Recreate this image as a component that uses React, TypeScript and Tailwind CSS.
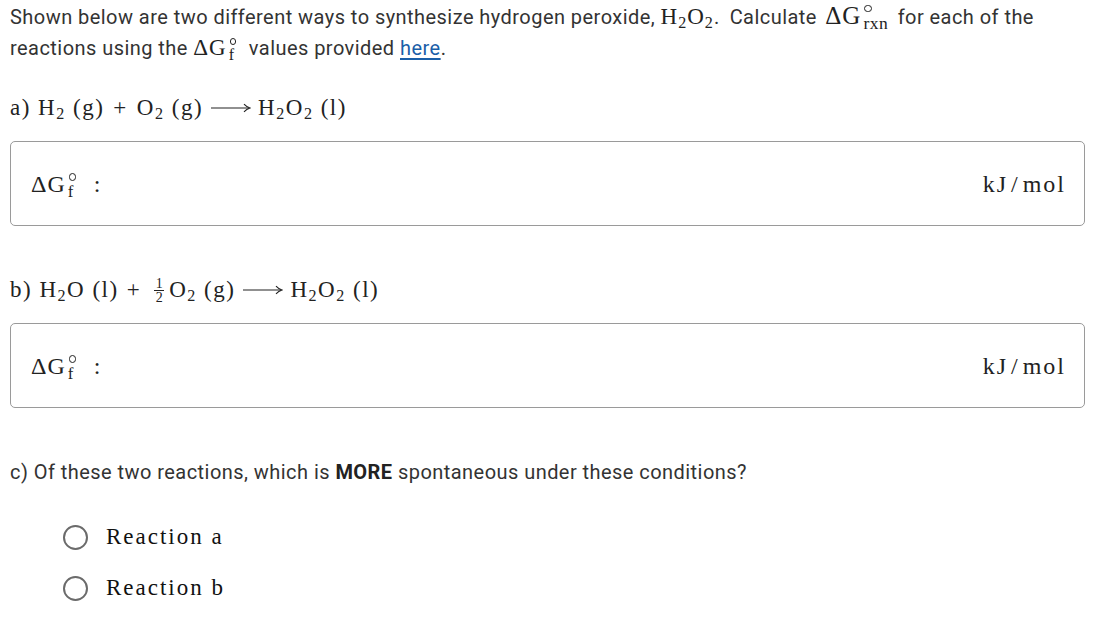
import React from "react";

const serif = { fontFamily: '"Liberation Serif", "DejaVu Serif", serif' };

const Sub = ({ children }: { children: React.ReactNode }) => (
  <span className="relative top-[0.22em] text-[0.7em]">{children}</span>
);

const Arrow = () => (
  <svg width="41" height="12" viewBox="0 0 41 12" className="mx-[7px] inline-block align-middle">
    <line x1="1" y1="6" x2="39" y2="6" stroke="#222" strokeWidth="1.1" />
    <path d="M34 2.2 Q36.5 5 40 6 Q36.5 7 34 9.8" fill="none" stroke="#222" strokeWidth="1.1" />
  </svg>
);

const Ring = () => (
  <span className="block h-[0.42em] w-[0.42em] rounded-full border border-[#222]" />
);

const DeltaG = ({ sub, className = "" }: { sub: string; className?: string }) => (
  <span className={"inline-flex items-center leading-none " + className} style={serif}>
    <span className="tracking-[1px]">ΔG</span>
    <span className="ml-[2px] inline-flex flex-col items-start text-[0.7em] leading-[0.9]">
      <span className="relative top-[-0.15em] flex h-[0.8em] items-end pl-[1px]">
        <Ring />
      </span>
      <span className="relative top-[0.05em] tracking-[0.5px]">{sub}</span>
    </span>
  </span>
);

const Half = () => (
  <span className="mx-[5px] inline-flex flex-col items-center align-middle text-[14px] leading-[13px] tracking-normal">
    <span>1</span>
    <span className="h-px w-[10px] bg-[#222]" />
    <span>2</span>
  </span>
);

const AnswerBox = () => (
  <div className="flex h-[85px] items-center justify-between rounded-[5px] border border-[#9a9a9a] pl-[20px] pr-[18px] text-[24px] text-[#222]">
    <span className="inline-flex items-center">
      <DeltaG sub="f" />
      <span className="ml-[18px]" style={serif}>:</span>
    </span>
    <span className="tracking-[2px]" style={serif}>
      kJ<span className="mx-[3px]">/</span>mol
    </span>
  </div>
);

const Radio = ({ label }: { label: string }) => (
  <label className="flex h-[30px] items-center">
    <span className="h-[25px] w-[25px] rounded-full border-2 border-[#6b6b6b] bg-white" />
    <span className="ml-[18px] text-[23px] tracking-[2px] text-[#111]" style={serif}>{label}</span>
  </label>
);

export default function App() {
  return (
    <div
      className="h-[635px] w-[1095px] bg-white px-[10px] pt-[1px] text-[20px] text-[#333]"
      style={{ fontFamily: 'Roboto, "Liberation Sans", sans-serif' }}
    >
      <p className="leading-[31px] tracking-[0.45px]">
        Shown below are two different ways to synthesize hydrogen peroxide,{" "}
        <span className="text-[23px] leading-none tracking-[1px] text-[#222]" style={serif}>
          H<Sub>2</Sub>O<Sub>2</Sub>
        </span>
        .<span className="ml-[10px]">Calculate</span>{" "}
        <DeltaG sub="rxn" className="ml-[3px] mr-[4px] text-[25px] text-[#222]" /> for each of the
        <br />
        reactions using the <DeltaG sub="f" className="mr-[7px] text-[23px] text-[#222]" /> values provided{" "}
        <a href="#" className="text-[#1a5fa8] underline decoration-2 underline-offset-[3px]">here</a>.
      </p>

      <div className="mt-[29px] flex h-[30px] items-center whitespace-pre text-[23px] tracking-[1.5px] text-[#222]" style={serif}>
        <span>a) H<Sub>2</Sub> (g)</span>
        <span className="mx-[9px]">+</span>
        <span>O<Sub>2</Sub> (g)</span>
        <Arrow />
        <span>H<Sub>2</Sub>O<Sub>2</Sub> (l)</span>
      </div>

      <div className="mt-[18px]">
        <AnswerBox />
      </div>

      <div className="mt-[49px] flex h-[30px] items-center whitespace-pre text-[23px] tracking-[1.5px] text-[#222]" style={serif}>
        <span>b) H<Sub>2</Sub>O (l)</span>
        <span className="mx-[8px]">+</span>
        <Half />
        <span>O<Sub>2</Sub> (g)</span>
        <Arrow />
        <span>H<Sub>2</Sub>O<Sub>2</Sub> (l)</span>
      </div>

      <div className="mt-[18px]">
        <AnswerBox />
      </div>

      <p className="mt-[49px] leading-[30px] tracking-[0.45px]">
        c) Of these two reactions, which is <b className="font-bold text-[#222]">MORE</b> spontaneous under these conditions?
      </p>

      <div className="mt-[35px] flex flex-col gap-[21px] pl-[53px]">
        <Radio label="Reaction a" />
        <Radio label="Reaction b" />
      </div>
    </div>
  );
}
